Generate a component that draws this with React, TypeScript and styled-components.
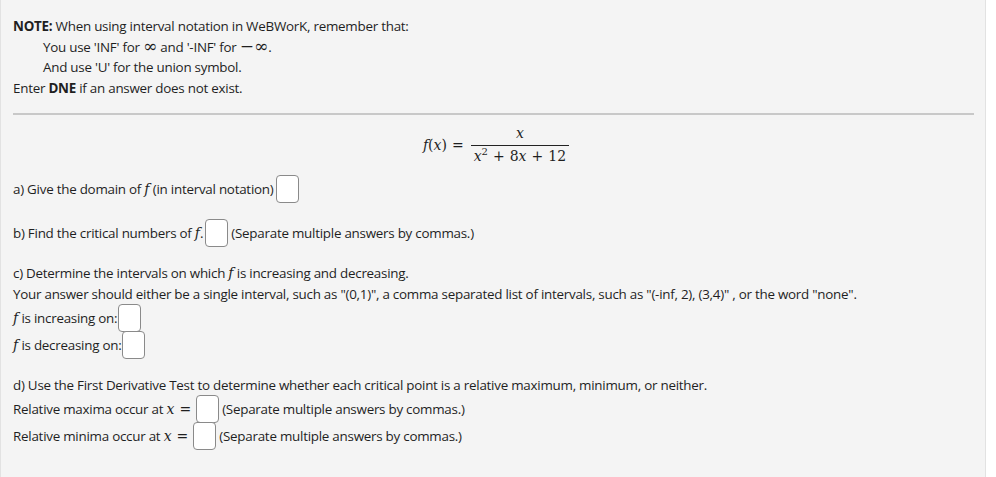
import styled, { createGlobalStyle } from "styled-components"

const GlobalStyle = createGlobalStyle`
  html, body {
    margin: 0;
    padding: 0;
    background: #fff;
  }
`

const ProblemWrapper = styled.div`
  box-sizing: border-box;
  width: 986px;
  min-height: 477px;
  background-color: #f4f4f4;
  border-left: 1px solid #e2e2e2;
  border-right: 1px solid #e2e2e2;
  padding: 16px 12px 20px 12px;
  font-family: "Open Sans", "Noto Sans", sans-serif;
  font-size: 13.4px;
  color: #1f1f1f;
  letter-spacing: -0.25px;
`

const Line = styled.div<{ indent?: boolean }>`
  line-height: 20.7px;
  padding-left: ${(props) => (props.indent ? "30px" : "0")};
`

const Divider = styled.hr`
  border: none;
  border-top: 2px solid #c8c8c8;
  margin: 14px 0 0 0;
  width: 961px;
`

const FormulaRow = styled.div`
  display: flex;
  justify-content: center;
  align-items: center;
  padding: 10px 0 0 0;
  margin-left: 6px;
  letter-spacing: 0;
`

const Fraction = styled.span`
  display: inline-flex;
  flex-direction: column;
  align-items: center;
  margin-left: 2px;
`

const Numer = styled.span`
  padding: 0 3px 3px;
  line-height: 17px;
`

const Denom = styled.span`
  border-top: 1px solid #222;
  padding: 2px 3px 0;
  line-height: 17px;
`

const M = styled.i`
  font-family: "DejaVu Serif", "Liberation Serif", serif;
  font-style: italic;
  font-size: 14px;
  letter-spacing: 0;
`

const Rm = styled.span<{ big?: boolean }>`
  font-family: "DejaVu Serif", "Liberation Serif", serif;
  font-size: ${(props) => (props.big ? "17px" : "14px")};
  letter-spacing: 0;
  line-height: 1;
`

const Sup = styled.sup`
  font-family: "DejaVu Serif", "Liberation Serif", serif;
  font-size: 10px;
  vertical-align: 6px;
  line-height: 0;
`

const Op = styled.span`
  font-family: "DejaVu Serif", "Liberation Serif", serif;
  font-size: 14px;
  letter-spacing: 0;
  margin: 0 5px;
`

const Part = styled.div<{ gap: number }>`
  margin-top: ${(props) => props.gap}px;
`

const AnswerLine = styled.div`
  display: flex;
  align-items: center;
  height: 27px;
`

const AnswerBox = styled.span<{ left?: number; right?: number }>`
  display: inline-block;
  box-sizing: border-box;
  width: 23px;
  height: 28px;
  background: #fff;
  border: 1px solid #8a8a8a;
  border-radius: 4px;
  margin-left: ${(props) => props.left ?? 2}px;
  margin-right: ${(props) => props.right ?? 3}px;
`

const App = () => {
  return (
    <>
      <GlobalStyle />
      <ProblemWrapper>
        <Line>
          <b>NOTE:</b> When using interval notation in WeBWorK, remember that:
        </Line>
        <Line indent>
          You use 'INF' for <Rm big>∞</Rm> and '-INF' for <Rm big>−∞</Rm>.
        </Line>
        <Line indent>And use 'U' for the union symbol.</Line>
        <Line>
          Enter <b>DNE</b> if an answer does not exist.
        </Line>
        <Divider />

        <FormulaRow>
          <M>f</M>
          <Rm>(</Rm>
          <M>x</M>
          <Rm>)</Rm>
          <Op>=</Op>
          <Fraction>
            <Numer>
              <M>x</M>
            </Numer>
            <Denom>
              <M>x</M>
              <Sup>2</Sup>
              <Op>+</Op>
              <Rm>8</Rm>
              <M>x</M>
              <Op>+</Op>
              <Rm>12</Rm>
            </Denom>
          </Fraction>
        </FormulaRow>

        <Part gap={11}>
          <AnswerLine>
            a) Give the domain of&nbsp;<M>f</M>&nbsp;(in interval notation)
            <AnswerBox />
          </AnswerLine>
        </Part>

        <Part gap={17}>
          <AnswerLine>
            b) Find the critical numbers of&nbsp;<M>f</M>.
            <AnswerBox />
            (Separate multiple answers by commas.)
          </AnswerLine>
        </Part>

        <Part gap={16}>
          <Line>
            c) Determine the intervals on which <M>f</M> is increasing and decreasing.
          </Line>
          <Line>
            Your answer should either be a single interval, such as "(0,1)", a comma separated list of
            intervals, such as "(-inf, 2), (3,4)" , or the word "none".
          </Line>
          <AnswerLine>
            <M>f</M>&nbsp;is increasing on:
            <AnswerBox left={1} />
          </AnswerLine>
          <AnswerLine>
            <M>f</M>&nbsp;is decreasing on:
            <AnswerBox left={1} />
          </AnswerLine>
        </Part>

        <Part gap={17}>
          <Line>
            d) Use the First Derivative Test to determine whether each critical point is a relative
            maximum, minimum, or neither.
          </Line>
          <AnswerLine>
            Relative maxima occur at&nbsp;<M>x</M>
            <Op>=</Op>
            <AnswerBox left={0} />
            (Separate multiple answers by commas.)
          </AnswerLine>
          <AnswerLine>
            Relative minima occur at&nbsp;<M>x</M>
            <Op>=</Op>
            <AnswerBox left={0} />
            (Separate multiple answers by commas.)
          </AnswerLine>
        </Part>
      </ProblemWrapper>
    </>
  )
}

export default App
